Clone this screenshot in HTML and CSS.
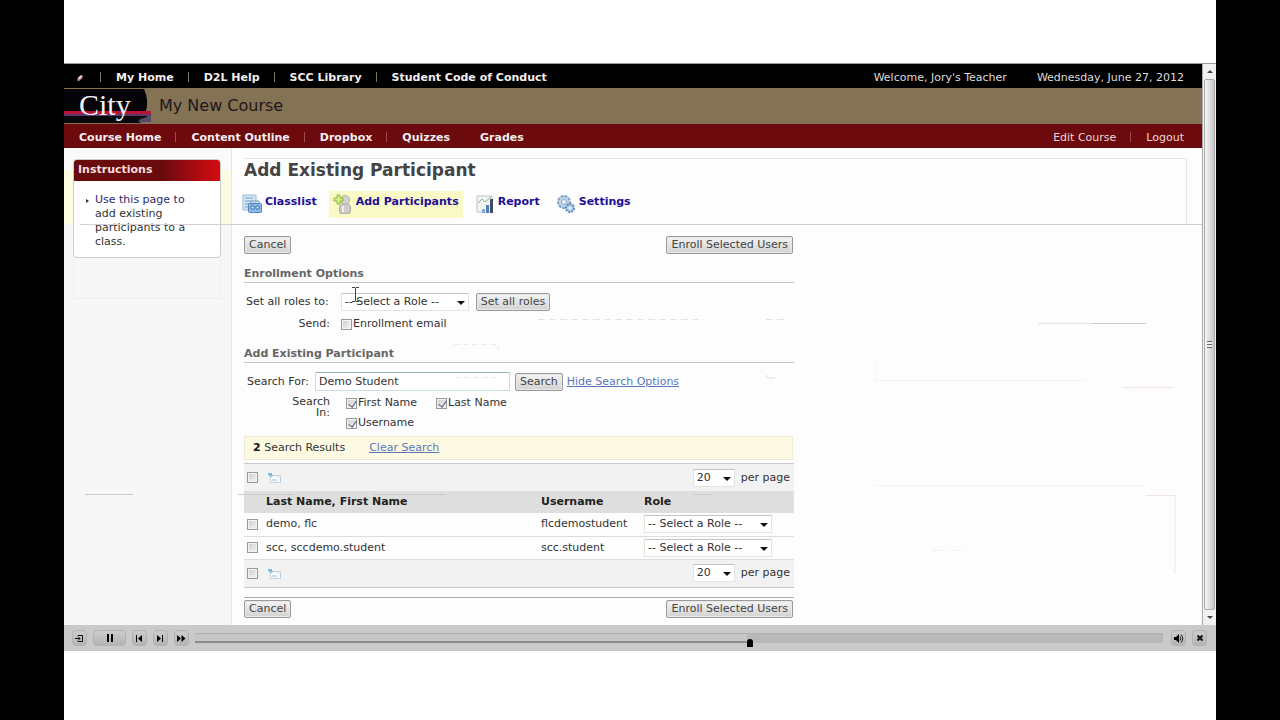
FILE: index.html
```html
<!DOCTYPE html>
<html lang="en">
<head>
<meta charset="UTF-8">
<meta name="viewport" content="width=device-width, initial-scale=1.0">
<title>Add Existing Participant - My New Course</title>
<link rel="stylesheet" href="styles.css">
</head>
<body>
<div class="stage">
    <div class="screen">
        <div class="page">
            <!-- top bar -->
            <header class="topbar">
                <div class="links">
                    <a class="pen" href="#" aria-label="Edit"><svg width="8" height="8" viewBox="0 0 8 8"><path d="M1 6.5L2 3.5L5 1L7 2L6 4.5L3 7Z" fill="#b98d90"/><path d="M2.5 4.5L5.5 2" stroke="#f3dede" stroke-width="1.5"/></svg></a>
                    <a href="#">My Home</a>
                    <a href="#">D2L Help</a>
                    <a href="#">SCC Library</a>
                    <a href="#">Student Code of Conduct</a>
                </div>
                <div class="user"><span>Welcome, Jory's Teacher</span><span>Wednesday, June 27, 2012</span></div>
            </header>
            <div class="brand">
                <svg class="logo" width="87" height="36" viewBox="0 0 87 36">
                    <path d="M0 1H80Q85 12 82 23H0Z" fill="#050409"/>
                    <path d="M0 23H87V26H0Z" fill="#bd1237"/>
                    <path d="M0 26H87V28H0Z" fill="#5f3768"/>
                    <path d="M0 28H84L76 35H0Z" fill="#08070c"/>
                    <path d="M76 31L87 28V34H74Z" fill="#574769"/>
                    <text x="15" y="27" font-family="Liberation Serif, serif" font-size="30" fill="#f4f1f4">City</text>
                </svg>
                <span class="course">My New Course</span>
            </div>
            <nav class="coursenav">
                <div class="links">
                    <a href="#">Course Home</a>
                    <a href="#">Content Outline</a>
                    <a href="#">Dropbox</a>
                    <a class="nosep" href="#">Quizzes</a>
                    <a href="#">Grades</a>
                </div>
                <div class="links plain">
                    <a href="#">Edit Course</a>
                    <a href="#">Logout</a>
                </div>
            </nav>

            <div class="body">
                <aside class="sidebar">
                    <section class="widget">
                        <h2>Instructions</h2>
                        <ul><li><span class="first">Use this page to</span> add existing participants to a class.</li></ul>
                    </section>
                    <div class="widget-empty"></div>
                </aside>

                <main class="main">
                    <div class="head">
                        <div class="head-box">
                            <h1>Add Existing Participant</h1>
                            <nav class="tools">
                                <a href="#">
                                    <svg width="20" height="20" viewBox="0 0 20 20"><path d="M1 1H14V16H1Z" fill="#d5e4f3" stroke="#9dbbd9"/><path d="M3 4H11M3 7H9M3 10H7M3 13H6" stroke="#75a1cc"/><rect x="6.500" y="9.500" width="13" height="9" rx="1" fill="#8db9e8" stroke="#5085bd"/><path d="M9 9V7H17V9" fill="none" stroke="#7197bd"/><path d="M9 12H12V15H9ZM14 12H17V15H14Z" fill="#e5f1fb" stroke="#3d73ad"/></svg>
                                    Classlist</a>
                                <a class="current" href="#">
                                    <svg width="20" height="20" viewBox="0 0 20 20"><circle cx="12" cy="6" r="4.500" fill="#d4d4cd" stroke="#b0b0a8"/><path d="M7 19Q5 11 9 10H15Q19 11 17 19Q12 21 7 19Z" fill="#cdcdc8" stroke="#aaaaa5"/><path d="M10 12V18" stroke="#eee" stroke-width="2"/><path d="M4 1H7V4H10V7H7V10H4V7H1V4H4Z" fill="#d8ee8b" stroke="#8fb83e"/></svg>
                                    Add Participants</a>
                                <a href="#">
                                    <svg width="20" height="20" viewBox="0 0 20 20"><path d="M2 2H17V18H2Z" fill="#f2f5f3" stroke="#bac5c0"/><path d="M3 9L7 5L10 8L16 3" fill="none" stroke="#82ba88"/><path d="M7 15H10V19H7Z" fill="#83a9d6"/><path d="M11 11H14V19H11Z" fill="#4f7fb8"/><path d="M15 5H18V19H15Z" fill="#3e4b60"/></svg>
                                    Report</a>
                                <a href="#">
                                    <svg width="20" height="20" viewBox="0 0 20 20"><circle cx="8" cy="8" r="6" fill="#bdd4ea" stroke="#83a4c7" stroke-width="2" stroke-dasharray="3 1"/><circle cx="8" cy="8" r="2.500" fill="#f4f8fc" stroke="#83a4c7"/><circle cx="14" cy="14" r="4" fill="#a9c9e9" stroke="#668fba" stroke-width="2" stroke-dasharray="2 1"/><circle cx="14" cy="14" r="1.500" fill="#f2f7fc"/></svg>
                                    Settings</a>
                            </nav>
                        </div>
                    </div>

                    <form class="form">
                        <div class="actions">
                            <button type="button">Cancel</button>
                            <button type="button">Enroll Selected Users</button>
                        </div>

                        <h3>Enrollment Options</h3>
                        <div class="row roles">
                            <label for="all-roles">Set all roles to:</label>
                            <span class="select role">
                                <select id="all-roles"><option>-- Select a Role --</option></select>
                                <svg class="cursor" width="7" height="15" viewBox="0 0 7 15"><path d="M0 .5H3L3.500 1L4 .5H7M3.500 1V14M0 14.500H3L3.500 14L4 14.500H7" fill="none" stroke="#444"/></svg>
                            </span>
                            <button type="button">Set all roles</button>
                        </div>
                        <div class="row send">
                            <span class="name">Send:</span>
                            <label><input type="checkbox">Enrollment email</label>
                        </div>

                        <h3 class="second">Add Existing Participant</h3>
                        <div class="row search">
                            <label for="search">Search For:</label>
                            <input type="text" id="search" value="Demo Student">
                            <button type="button">Search</button>
                            <a href="#">Hide Search Options</a>
                        </div>
                        <div class="row fields">
                            <span class="name">Search In:</span>
                            <div class="checks">
                                <label><input type="checkbox" checked>First Name</label>
                                <label><input type="checkbox" checked>Last Name</label>
                                <label><input type="checkbox" checked>Username</label>
                            </div>
                        </div>

                        <div class="results"><span><b>2</b> Search Results</span><a href="#">Clear Search</a></div>

                        <div class="pager">
                            <input type="checkbox" aria-label="Select all rows">
                            <svg width="13" height="11" viewBox="0 0 13 11"><path d="M2.500 3.500H12.500V10.500H2.500Z" fill="#f4f8fa" stroke="#c3d3dc"/><path d="M4 8H9M10 5H11" stroke="#9dc0d3"/><path d="M0 1H4V3H6L3 5L0 3Z" fill="#7dbbd8"/></svg>
                            <span class="select count"><select aria-label="Rows"><option>20</option></select></span>
                            <span>per page</span>
                        </div>
                        <table class="users">
                            <thead>
                                <tr><th class="pick"></th><th class="who">Last Name, First Name</th><th class="login">Username</th><th>Role</th></tr>
                            </thead>
                            <tbody>
                                <tr>
                                    <td><input type="checkbox" aria-label="Select demo, flc"></td>
                                    <td>demo, flc</td>
                                    <td>flcdemostudent</td>
                                    <td><span class="select role"><select aria-label="Role for demo, flc"><option>-- Select a Role --</option></select></span></td>
                                </tr>
                                <tr>
                                    <td><input type="checkbox" aria-label="Select scc, sccdemo.student"></td>
                                    <td>scc, sccdemo.student</td>
                                    <td>scc.student</td>
                                    <td><span class="select role"><select aria-label="Role for scc, sccdemo.student"><option>-- Select a Role --</option></select></span></td>
                                </tr>
                            </tbody>
                        </table>
                        <div class="pager last">
                            <input type="checkbox" aria-label="Select all rows">
                            <svg width="13" height="11" viewBox="0 0 13 11"><path d="M2.500 3.500H12.500V10.500H2.500Z" fill="#f4f8fa" stroke="#c3d3dc"/><path d="M4 8H9M10 5H11" stroke="#9dc0d3"/><path d="M0 1H4V3H6L3 5L0 3Z" fill="#7dbbd8"/></svg>
                            <span class="select count"><select aria-label="Rows"><option>20</option></select></span>
                            <span>per page</span>
                        </div>

                        <div class="actions bottom">
                            <button type="button">Cancel</button>
                            <button type="button">Enroll Selected Users</button>
                        </div>
                    </form>
                </main>
            </div>
            <!-- faint leftovers of the previous video frames -->
            <svg class="traces" width="1138" height="560" viewBox="0 0 1138 560">
                <path d="M16 160.500H168" stroke="#d8cfd3"/>
                <path d="M974 259.500H1028" stroke="#e4e4e4"/>
                <path d="M1028 259.500H1082" stroke="#ccc"/>
                <path d="M21 430.500H69M174 430.500H230M310 430.500H382M629 430.500H649" stroke="#ccc"/>
                <path d="M390 280.500H434V286M391 313.500H434" fill="none" stroke="#eaeaea" stroke-dasharray="6 3"/>
                <path d="M474 255.500H640M702 255.500H722" stroke="#e4e4e4" stroke-dasharray="7 4"/>
                <path d="M703 311V314H711" fill="none" stroke="#ddd"/>
                <path d="M1058 323.500H1110M1082 431.500H1111V510" fill="none" stroke="#f4e3e5"/>
                <path d="M812 300V316.500H1020M812 421.500H1080" fill="none" stroke="#f7f1f2"/>
                <path d="M869 486.500H883M888 486.500H900" stroke="#eee" stroke-dasharray="4 2"/>
            </svg>
        </div>
        <div class="scrollbar"><span class="up"></span><span class="thumb"><i></i></span><span class="down"></span></div>
    </div>

    <div class="player">
        <button type="button" aria-label="Contents"><svg width="9" height="9" viewBox="0 0 9 9"><path d="M3 2.500V1.500H7.500V7.500H3V6.500M0 4.500H5M3.500 3L5 4.500L3.500 6" fill="none" stroke="#111"/></svg></button>
        <button type="button" class="pause" aria-label="Pause"><svg width="6" height="8" viewBox="0 0 6 8"><path d="M0 0H2V8H0ZM4 0H6V8H4Z"/></svg></button>
        <button type="button" aria-label="Back"><svg width="7" height="7" viewBox="0 0 7 7"><path d="M0 0H1V7H0ZM6 0V7L2 3.500Z"/></svg></button>
        <button type="button" aria-label="Next"><svg width="7" height="7" viewBox="0 0 7 7"><path d="M0 0L4 3.500L0 7ZM5 0H6V7H5Z"/></svg></button>
        <button type="button" aria-label="Fast forward"><svg width="9" height="7" viewBox="0 0 9 7"><path d="M0 0L4 3.500L0 7ZM4.500 0L8.500 3.500L4.500 7Z"/></svg></button>
        <input type="range" min="0" max="1000" value="574" aria-label="Position">
        <button type="button" aria-label="Volume"><svg width="10" height="9" viewBox="0 0 10 9"><path d="M0 3H2L5 0V9L2 6H0Z"/><path d="M6 2.500Q7.500 4.500 6 6.500M7 .5Q10.500 4.500 7 8.500" fill="none" stroke="#111"/></svg></button>
        <button type="button" aria-label="Close"><svg width="6" height="6" viewBox="0 0 6 6"><path d="M.5 .5L5.500 5.500M5.500 .5L.5 5.500" stroke="#111" stroke-width="2"/></svg></button>
    </div>
</div>
</body>
</html>
```
FILE: styles.css
```css
* {
    box-sizing: border-box;
}
body {
    margin: 0;
    background: #000;
    font-family: "DejaVu Sans", Verdana, sans-serif;
    font-size: 11px;
    line-height: 14px;
    color: #333;
}
h1, h2, h3, ul {
    margin: 0;
    padding: 0;
}
a {
    color: #5a78b8;
}
.stage {
    margin: 0 5%;
    min-height: 100vh;
    padding-top: 63px;
    background: #fff;
}
.screen {
    display: flex;
    border-top: 1px solid #999;
}
.page {
    position: relative;
    flex: 1;
    min-width: 0;
}

/* header bars */
.topbar, .coursenav {
    display: flex;
    justify-content: space-between;
    align-items: center;
    height: 24px;
    padding-top: 4px;
    padding-right: 18px;
    color: #ddd;
    background: #000;
}
.links {
    display: flex;
}
.links a {
    display: flex;
    align-items: center;
    padding: 0 15px;
    height: 14px;
    font-weight: bold;
    color: #f2eeee;
    text-decoration: none;
    background: linear-gradient(#776, #776) right 1px / 1px 10px no-repeat;
}
.links .pen {
    padding: 0 17px 0 12px;
}
.user {
    display: flex;
    gap: 30px;
}
.brand {
    display: flex;
    align-items: center;
    height: 36px;
    background: #837253;
}
.logo {
    overflow: visible;
}
.course {
    margin-left: 8px;
    font-size: 16px;
    line-height: 20px;
    color: #21161d;
}
.coursenav {
    background: #6c0a0e;
    padding-right: 3px;
}
.coursenav .links a {
    background-image: linear-gradient(#9c4b4e, #9c4b4e);
}
.coursenav .links a:last-child, .coursenav .links .nosep, .topbar .links a:last-child {
    background: none;
}
.links.plain a {
    font-weight: normal;
    color: #ecd6d6;
}

/* columns */
.body {
    display: flex;
    min-height: 477px;
}
.sidebar {
    width: 168px;
    padding: 11px 10px 0 9px;
    border-right: 1px solid #e6e6e6;
    background: linear-gradient(#fafafa 22px, #fbfce2 22px, #fbfce2 76px, #f7f7f7 76px);
}
.widget {
    border: 1px solid #ccc;
    border-radius: 4px;
    background: #fff;
    overflow: hidden;
}
.widget h2 {
    margin: -1px -1px 0;
    padding: 4px 5px;
    font-size: 11px;
    line-height: 14px;
    color: #f6dede;
    background: linear-gradient(90deg, #690a0d 60%, #a60b10 82%, #d80b12);
}
.widget ul {
    list-style: none;
    padding: 12px 20px 8px 21px;
}
.widget li {
    position: relative;
}
.widget li::before {
    content: "";
    position: absolute;
    left: -9px;
    top: 6px;
    border: 2px solid transparent;
    border-left: 3px solid #333;
}
.first {
    color: #2b2b70;
}
.widget-empty {
    height: 41px;
    border: 1px solid #eee;
    border-top: 0;
}
.main {
    flex: 1;
    min-width: 0;
    background: #fdfdfd;
}
.head {
    height: 77px;
    padding: 10px 15px 0 12px;
    border-bottom: 1px solid #d4cdcf;
}
.head-box {
    height: 66px;
    border-top: 1px solid #eedfe2;
    border-right: 1px solid #f0e2e5;
}
h1 {
    font-size: 17px;
    line-height: 22px;
    color: #444;
}
.tools {
    display: flex;
    gap: 8px;
    margin: 10px 0 0 -6px;
}
.tools a {
    display: flex;
    align-items: center;
    gap: 3px;
    height: 27px;
    padding: 0 4px 6px;
    font-weight: bold;
    color: #1e0f96;
    text-decoration: none;
}
.tools svg {
    margin-top: 4px;
}
.tools .current {
    background: #fafac8;
}

/* form */
.form {
    max-width: 562px;
    padding-left: 12px;
}
.actions {
    display: flex;
    justify-content: space-between;
    padding-top: 11px;
    margin-right: 1px;
}
.form button {
    height: 18px;
    padding: 0 4px;
    border: 1px solid #999;
    border-radius: 2px;
    background: linear-gradient(#f4f4f4, #d2d2d2);
    font: inherit;
    color: #444;
    box-shadow: inset 0 0 0 1px #e8e8e8;
}
h3 {
    margin-top: 13px;
    padding-bottom: 1px;
    border-bottom: 1px solid #c4c4c4;
    font-size: 11px;
    line-height: 14px;
    color: #666;
}
.row {
    display: flex;
    align-items: center;
}
.row label {
    display: flex;
    align-items: center;
}
.roles {
    padding: 10px 0 0 2px;
    gap: 7px;
}
.roles label {
    margin-right: 5px;
}
.select {
    position: relative;
    display: inline-flex;
    height: 18px;
    background: #fff;
    border: 1px solid #e4e4e4;
    border-top-color: #c4c4c4;
}
.select::after {
    content: "";
    position: absolute;
    right: 3px;
    top: 7px;
    border: 4px solid transparent;
    border-top-color: #111;
    border-bottom: 0;
}
.select select {
    width: 100%;
    padding: 0 0 0 3px;
    border: 0;
    background: none;
    appearance: none;
    font: inherit;
    color: #333;
}
.role {
    width: 128px;
}
.count {
    width: 42px;
}
.cursor {
    position: absolute;
    left: 10px;
    top: -7px;
    z-index: 1;
}
input[type="checkbox"] {
    display: block;
    width: 11px;
    height: 11px;
    margin: 0;
    appearance: none;
    border: 1px solid #999;
    background: linear-gradient(135deg, #ccc, #f6f6f6);
    box-shadow: inset 0 0 0 1px #f4f4f4;
}
input[type="checkbox"]:checked::before {
    content: "";
    display: block;
    width: 4px;
    height: 7px;
    margin: 0 0 0 3px;
    border: solid #555c88;
    border-width: 0 1px 1px 0;
    transform: rotate(35deg);
}
.row input[type="checkbox"] {
    margin-right: 1px;
}
.name {
    width: 86px;
    text-align: right;
}
.send {
    gap: 11px;
    padding-top: 6px;
}
.second {
    margin-top: 16px;
}
.search {
    padding: 9px 0 0 3px;
}
.search input {
    width: 195px;
    height: 19px;
    margin: 0 5px 0 6px;
    padding: 0 3px;
    border: 1px solid #ccdde2;
    border-top-color: #98b5bc;
    background: #fff;
    font: inherit;
    color: #333;
}
.search a {
    margin-left: 4px;
}
.fields {
    align-items: flex-start;
    padding-top: 5px;
    gap: 16px;
}
.fields .name {
    padding-left: 40px;
    line-height: 11px;
}
.checks {
    display: grid;
    grid-template-columns: 90px 90px;
    row-gap: 6px;
}
.results {
    display: flex;
    gap: 24px;
    margin: 6px 1px 3px 0;
    padding: 4px 8px;
    border: 1px solid #f0ecd0;
    background: #fdfae3;
}
.results b {
    color: #111;
}
.pager {
    display: flex;
    align-items: center;
    height: 28px;
    padding: 0 4px 0 3px;
    border-top: 1px solid #c8c8c8;
    background: #f2f2f2;
}
.pager svg {
    margin-left: 10px;
}
.pager .count {
    margin: 0 6px 0 auto;
}
.users {
    width: 100%;
    table-layout: fixed;
    border-collapse: collapse;
}
.users th {
    height: 22px;
    padding: 0;
    background: #dedede;
    color: #222;
    text-align: left;
}
.users td {
    height: 23px;
    padding: 0;
    border-bottom: 1px solid #ddd;
}
.users td:first-child {
    padding-left: 3px;
}
.users .select {
    display: flex;
}
.pick {
    width: 22px;
}
.who {
    width: 275px;
}
.login {
    width: 103px;
}
.last {
    border-top: 0;
    border-bottom: 1px solid #c8c8c8;
}
.bottom {
    margin: 9px 0 0;
    padding: 2px 1px 0 0;
    border-top: 1px solid #aaa;
}
.traces {
    position: absolute;
    left: 0;
    top: 0;
    pointer-events: none;
}

/* browser scrollbar */
.scrollbar {
    display: flex;
    flex-direction: column;
    align-items: center;
    width: 14px;
    border-left: 1px solid #aaa;
    background: #f1f1f1;
}
.up, .down {
    margin: 6px 0;
    border: 3px solid transparent;
    border-top: 0;
    border-bottom-color: #444;
}
.down {
    border-top: 3px solid #444;
    border-bottom: 0;
}
.thumb {
    display: flex;
    align-items: center;
    justify-content: center;
    flex: 1;
    width: 11px;
    border: 1px solid #aaa;
    border-radius: 2px;
    background: linear-gradient(90deg, #f6f6f6, #c6c6c6);
}
.thumb i {
    width: 5px;
    height: 7px;
    background: repeating-linear-gradient(#666 0 1px, #eee 1px 3px);
}

/* video player */
.player {
    display: flex;
    align-items: center;
    gap: 6px;
    height: 26px;
    padding: 0 9px 0 8px;
    background: #cacaca;
}
.player button {
    display: flex;
    align-items: center;
    justify-content: center;
    width: 15px;
    height: 16px;
    padding: 0;
    border: 1px solid #b2b2b2;
    border-radius: 4px;
    background: linear-gradient(#ccc, #b4b4b4);
}
.player .pause {
    width: 33px;
}
.player input {
    flex: 1;
    height: 18px;
    margin: 0 2px 0 0;
    appearance: none;
    background:
        linear-gradient(#b0b0b0, #b0b0b0) 0 4px / 100% 1px no-repeat,
        linear-gradient(#8c8c8c, #8c8c8c) 0 12px / 57% 2px no-repeat,
        linear-gradient(#c6c6c6, #c6c6c6) 0 5px / 57% 7px no-repeat,
        linear-gradient(#b8b8b8, #b8b8b8) 0 5px / 100% 9px no-repeat;
}
.player input::-webkit-slider-thumb {
    appearance: none;
    width: 6px;
    height: 8px;
    margin-top: 10px;
    background: #000;
    border-radius: 3px 3px 0 0;
}
```
